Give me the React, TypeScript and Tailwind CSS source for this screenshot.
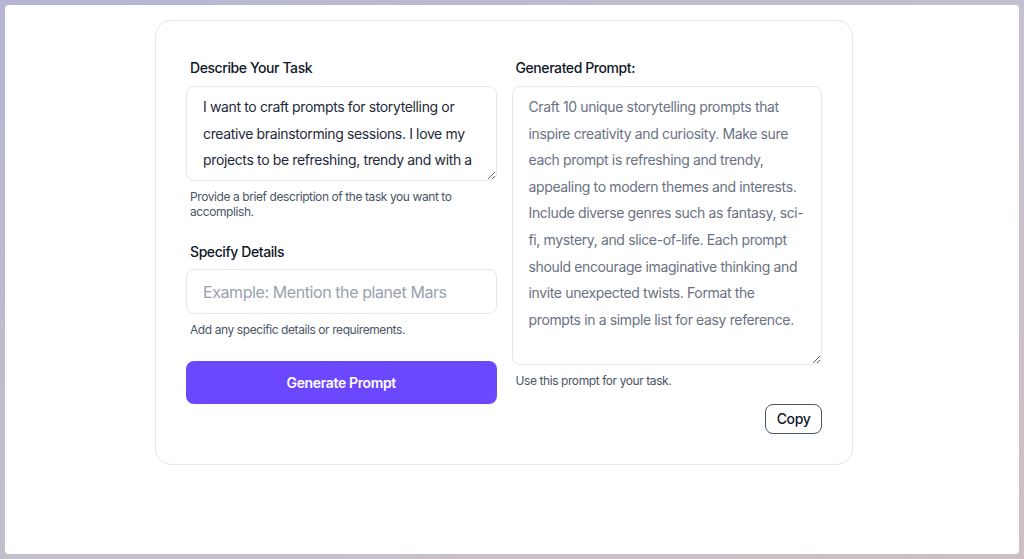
import { useState } from 'react'

const generated =
  'Craft 10 unique storytelling prompts that inspire creativity and curiosity. Make sure each prompt is refreshing and trendy, appealing to modern themes and interests. Include diverse genres such as fantasy, sci-fi, mystery, and slice-of-life. Each prompt should encourage imaginative thinking and invite unexpected twists. Format the prompts in a simple list for easy reference.'

export default function App() {
  const [task, setTask] = useState(
    'I want to craft prompts for storytelling or creative brainstorming sessions. I love my projects to be refreshing, trendy and with a touch of humor.',
  )
  const [details, setDetails] = useState('')

  return (
    <div
      className="h-screen w-full bg-gradient-to-br from-[#b6b6d3] via-[#c4bfcd] to-[#cdbfc3] p-[5px] tracking-[-0.026em]"
      style={{ fontFamily: 'Inter, "Noto Sans", sans-serif' }}
    >
      <div className="h-full w-full rounded-[4px] bg-white pl-[150px] pt-[15px]">
        <div className="w-[698px] rounded-2xl border border-gray-200 bg-white px-[30px] pb-[30px] pt-[37px]">
          <div className="grid grid-cols-2 gap-[15px]">
            {/* left column */}
            <div className="flex flex-col">
              <label className="mb-2 ml-1 block text-sm leading-5 font-medium text-gray-900">
                Describe Your Task
              </label>
              <textarea
                value={task}
                onChange={(e) => setTask(e.target.value)}
                rows={3}
                className="h-[95px] w-full rounded-lg border border-gray-200 px-4 py-[7px] text-sm leading-[26.6px] tracking-[-0.026em] text-gray-800 focus:outline-none"
              />
              <p className="mt-2 ml-1 text-xs leading-[15px] text-gray-600">
                Provide a brief description of the task you want to accomplish.
              </p>

              <label className="mt-[23px] mb-[7px] ml-1 block text-sm leading-5 font-medium text-gray-900">
                Specify Details
              </label>
              <input
                value={details}
                onChange={(e) => setDetails(e.target.value)}
                placeholder="Example: Mention the planet Mars"
                className="h-[45px] w-full rounded-lg border border-gray-200 px-4 text-base tracking-[-0.026em] text-gray-800 placeholder:text-gray-400 focus:outline-none"
              />
              <p className="mt-2 ml-1 text-xs leading-4 text-gray-600">
                Add any specific details or requirements.
              </p>

              <button
                type="button"
                className="mt-[23px] h-[43px] w-full rounded-lg bg-[#6b47ff] text-sm font-semibold tracking-[-0.026em] text-white"
              >
                Generate Prompt
              </button>
            </div>

            {/* right column */}
            <div className="flex flex-col">
              <label className="mb-2 ml-1 block text-sm leading-5 font-medium text-gray-900">
                Generated Prompt:
              </label>
              <textarea
                readOnly
                value={generated}
                className="h-[279px] w-full rounded-lg border border-gray-200 px-4 py-[7px] text-sm leading-[26.6px] tracking-[-0.026em] text-gray-500 focus:outline-none"
              />
              <p className="mt-2 ml-1 text-xs leading-4 text-gray-600">
                Use this prompt for your task.
              </p>
              <div className="mt-[15px] flex justify-end">
                <button
                  type="button"
                  className="h-[30px] w-[57px] rounded-lg border border-gray-600 text-sm font-medium tracking-[-0.026em] text-gray-900"
                >
                  Copy
                </button>
              </div>
            </div>
          </div>
        </div>
      </div>
    </div>
  )
}
